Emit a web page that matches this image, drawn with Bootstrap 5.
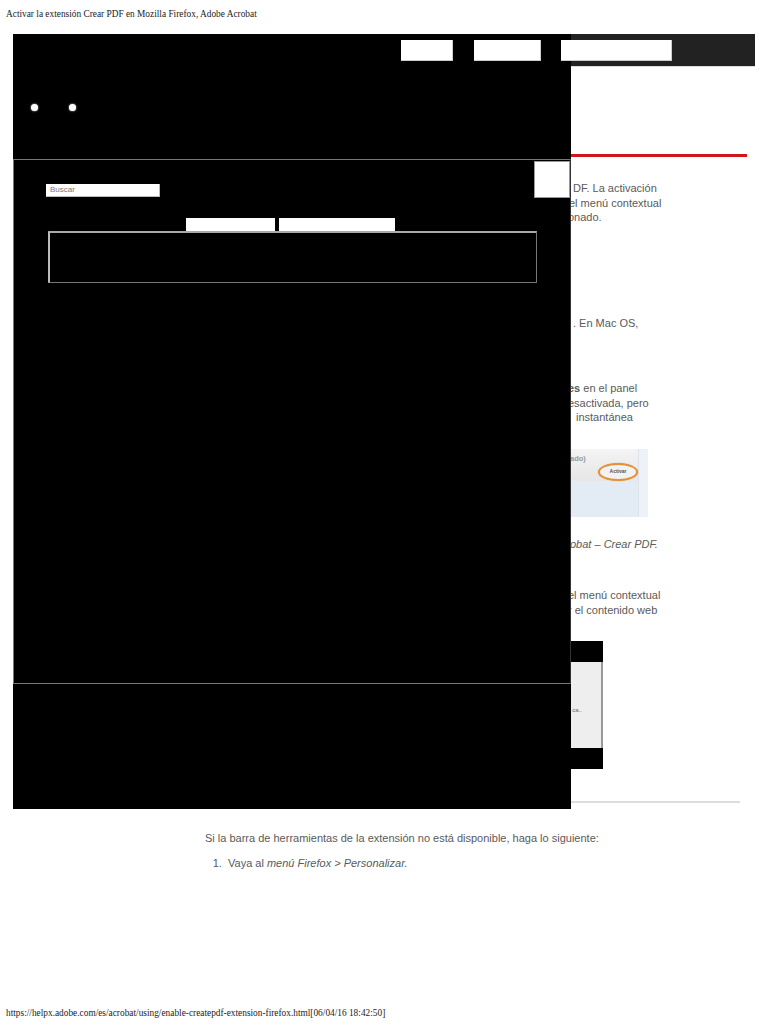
<!DOCTYPE html>
<html lang="es">
<head>
<meta charset="utf-8">
<title>Activar la extensión Crear PDF en Mozilla Firefox, Adobe Acrobat</title>
<link href="https://cdn.jsdelivr.net/npm/bootstrap@5.3.0/dist/css/bootstrap.min.css" rel="stylesheet">
<style>
body{background:#fff;font-family:"Liberation Sans",Arial,sans-serif;font-size:11px;color:#5a5a5a;height:1024px;overflow:hidden;position:relative;line-height:14.5px}
.doc-title,.doc-foot{font-family:"Liberation Serif",serif;font-size:9.33px;color:#222;line-height:12px;white-space:nowrap}
.doc-title{padding:8px 0 0 6px;height:34px}
.doc-foot{position:absolute;left:6px;top:1007px}
.top-bar{margin-left:13px;width:742px;height:33px;background:#222;border-bottom:1px solid #ddd;padding:6px 0 0 388px;gap:21px}
.top-btn{position:relative;z-index:3;height:21px;background:#fff;border:0;border-right:1px solid #ccc;border-bottom:1px solid #ccc;padding:0}
.w-a{width:52px}.w-b{width:67px}.w-c{width:111px;margin-left:-1px}
.black-layer{position:absolute;left:13px;top:34px;width:558px;height:775px;background:#000;z-index:2}
.head-zone{height:125px;padding:70px 0 0 17px;gap:30px}
.dot-w{width:7px;height:7px;border-radius:50%;background:#fff;box-shadow:0 0 2px #ddd;margin-left:1px}
.panel-zone{height:525px;border:1px solid #777;border-right-color:#333;position:relative;padding:24px 0 0 32px}
.search-box{width:114px;height:13px;background:#fff;border-right:1px solid #bbb;border-bottom:1px solid #bbb;font-size:8px;line-height:12px;color:#777;padding-left:4px}
.tab-row{margin:21px 0 0 140px;gap:4px;height:13px}
.tab-w{height:13px;background:#fff}
.tab-a{width:89px}.tab-b{width:116px}
.panel-box{width:489px;height:52px;margin-left:2px;border:1px solid #777;border-top:2px solid #aaa;border-left:2px solid #bbb}
.close-w{position:absolute;right:0;top:1px;width:36px;height:37px;background:#fff;border:1px solid #999}
.red-rule{margin:87px 0 0 13px;width:734px;height:3px;background:#d2151a}
.art{margin-left:205px;width:535px}
.line{white-space:nowrap;height:14.5px}
.s-a{margin-left:368px}.s-b{margin-left:364px}.s-c{margin-left:363px}.s-d{margin-left:371px}.s-e{margin-left:365px}
.gap-a{margin-top:24px}.gap-b{margin-top:91px}.gap-c{margin-top:51px}.gap-d{margin-top:20px}.gap-e{margin-top:37px}
.shot{margin-left:300px;width:143px;height:68px;margin-top:24px;background:#e3ebf5;position:relative;overflow:hidden}
.shot-top{height:32px;background:linear-gradient(#f4f4f4,#e6e6e6);padding:4px 0 0 65px;font-size:7.5px;font-weight:700;color:#999;line-height:12px}
.shot-strip{position:absolute;right:0;top:0;bottom:0;width:10px;background:#edf1f8;border-left:1px solid #dde3ec}
.act-oval{position:absolute;left:93px;top:14px;width:40px;height:18px;border:2.5px solid #e2923a;border-radius:50%;background:#f2f2f2;box-shadow:0 0 1px #e2923a;font-size:5px;font-weight:700;color:#555;text-align:center;line-height:13px}
.dlg{margin-left:300px;width:98px;height:128px;margin-top:24px;background:#000;padding:21px 0}
.dlg-in{height:86px;background:#eee;border-right:2px solid #999;font-size:6px;color:#666;text-align:right;padding:42px 19px 0 0;line-height:12px}
.soft-rule{height:2px;background:#ddd;margin-top:32px}
.after-p{margin:28px 0 0;white-space:nowrap}
.after-l{margin:10px 0 0;padding-left:23px}
.after-l li::marker{content:"1.\00a0\00a0"}
</style>
</head>
<body>
<div class="doc-title">Activar la extensión Crear PDF en Mozilla Firefox, Adobe Acrobat</div>
<div class="top-bar d-flex">
  <button class="top-btn w-a" type="button"></button>
  <button class="top-btn w-b" type="button"></button>
  <button class="top-btn w-c" type="button"></button>
</div>
<div class="red-rule"></div>
<div class="art">
  <div class="line s-a gap-a">DF. La activación</div>
  <div class="line s-b">el menú contextual</div>
  <div class="line s-c">onado.</div>
  <div class="line s-a gap-b">. En Mac OS,</div>
  <div class="line s-c gap-c"><b>es</b> en el panel</div>
  <div class="line s-c">esactivada, pero</div>
  <div class="line s-d">instantánea</div>
  <div class="shot"><div class="shot-top">ado)</div><div class="shot-strip"></div><div class="act-oval">Activar</div></div>
  <div class="line s-e gap-d"><i>obat – Crear PDF.</i></div>
  <div class="line s-c gap-e">el menú contextual</div>
  <div class="line s-c">r el contenido web</div>
  <div class="dlg"><div class="dlg-in">ca..</div></div>
  <div class="soft-rule"></div>
  <p class="after-p">Si la barra de herramientas de la extensión no está disponible, haga lo siguiente:</p>
  <ol class="after-l"><li>Vaya al <i>menú Firefox &gt; Personalizar.</i></li></ol>
</div>
<div class="black-layer">
  <div class="head-zone d-flex align-items-start"><span class="dot-w"></span><span class="dot-w"></span></div>
  <div class="panel-zone">
    <div class="close-w"></div>
    <div class="search-box">Buscar</div>
    <div class="tab-row d-flex"><div class="tab-w tab-a"></div><div class="tab-w tab-b"></div></div>
    <div class="panel-box"></div>
  </div>
</div>
<div class="doc-foot">https://helpx.adobe.com/es/acrobat/using/enable-createpdf-extension-firefox.html[06/04/16 18:42:50]</div>
<script src="https://cdn.jsdelivr.net/npm/bootstrap@5.3.0/dist/js/bootstrap.bundle.min.js"></script>
</body>
</html>
